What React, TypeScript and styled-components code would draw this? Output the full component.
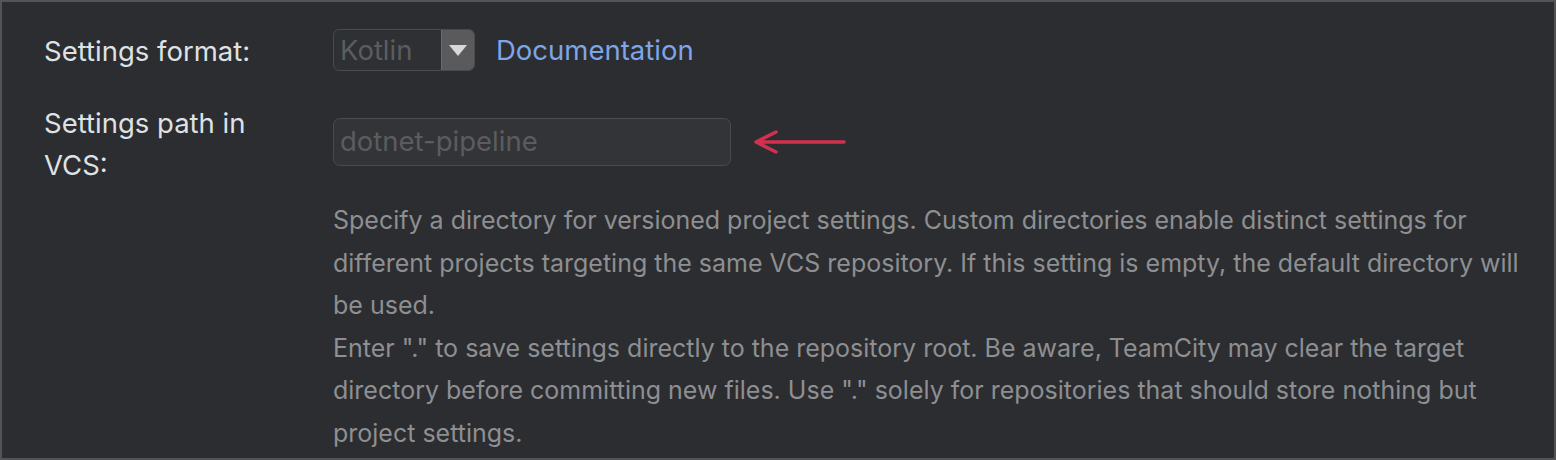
import React from "react";
import styled, { createGlobalStyle } from "styled-components";

const Global = createGlobalStyle`
  html, body { margin: 0; padding: 0; background: #2b2d30; }
  body { font-family: Inter, "Noto Sans", sans-serif; }
`;

const Frame = styled.div`
  box-sizing: border-box;
  width: 1556px;
  height: 460px;
  border: 2px solid #545456;
  background: #2b2d30;
  padding: 24px 0 0 42px;
  display: grid;
  grid-template-columns: 289px 1fr;
  grid-auto-rows: auto;
  align-content: start;
  overflow: hidden;
`;

const Label = styled.div<{ $top?: number }>`
  color: #dfe1e5;
  font-size: 27.5px;
  line-height: 42px;
  padding-top: ${(p) => p.$top ?? 0}px;
  width: 240px;
`;

const Field = styled.div<{ $top?: number }>`
  display: flex;
  flex-direction: column;
  padding-top: ${(p) => p.$top ?? 0}px;
`;

const Row = styled.div`
  display: flex;
  align-items: center;
  gap: 21px;
`;

const Select = styled.div`
  box-sizing: border-box;
  width: 142px;
  height: 42px;
  border: 1.5px solid #4a4b4e;
  border-radius: 6px;
  background: #2f3033;
  display: flex;
  overflow: hidden;
`;

const SelectValue = styled.div`
  flex: 1;
  color: #5b5c5f;
  font-size: 27.5px;
  line-height: 41px;
  padding-left: 6px;
`;

const SelectButton = styled.div`
  width: 32px;
  background: #5a5a5c;
  border-left: 1.5px solid #6a6b6d;
  display: flex;
  align-items: center;
  justify-content: center;
`;

const Link = styled.a`
  color: #7ea5e8;
  font-size: 27.5px;
  text-decoration: none;
`;

const Input = styled.div`
  box-sizing: border-box;
  width: 398px;
  height: 48px;
  border: 1.5px solid #4a4b4e;
  border-radius: 7px;
  background: #333437;
  color: #5b5c5f;
  font-size: 27.5px;
  line-height: 45px;
  padding-left: 6px;
`;

const Help = styled.div`
  color: #8e8f92;
  font-size: 25px;
  line-height: 42.5px;
  width: 1200px;
  margin-top: 33px;
`;

export default function App() {
  return (
    <>
      <Global />
      <Frame>
        <Label $top={4}>Settings format:</Label>
        <Field $top={3}>
          <Row>
            <Select>
              <SelectValue>Kotlin</SelectValue>
              <SelectButton>
                <svg width="20" height="13" viewBox="0 0 20 13">
                  <path d="M1 1 H19 L10 12 Z" fill="#d8d8d8" />
                </svg>
              </SelectButton>
            </Select>
            <Link href="#">Documentation</Link>
          </Row>
        </Field>
        <Label $top={30}>Settings path in VCS:</Label>
        <Field $top={46}>
          <Row>
            <Input>dotnet-pipeline</Input>
            <svg width="96" height="28" viewBox="0 0 96 28">
              <path d="M4 14 H92 M24 4 L4 14 L24 24" stroke="#d2304e" strokeWidth="3.5" fill="none" strokeLinecap="round" strokeLinejoin="round" />
            </svg>
          </Row>
          <Help>
            Specify a directory for versioned project settings. Custom directories enable distinct settings for different projects targeting the same VCS repository. If this setting is empty, the default directory will be used.
            <br />
            Enter "." to save settings directly to the repository root. Be aware, TeamCity may clear the target directory before committing new files. Use "." solely for repositories that should store nothing but project settings.
          </Help>
        </Field>
      </Frame>
    </>
  );
}
